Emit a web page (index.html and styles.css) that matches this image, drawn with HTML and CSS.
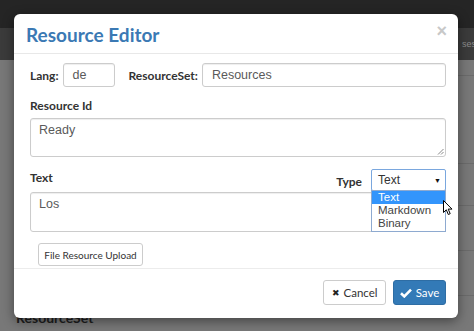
FILE: index.html
```html
<!DOCTYPE html>
<html>
<head>
<meta charset="utf-8">
<link rel="stylesheet" href="styles.css">
</head>
<body>
<div class="page">
  <div class="navbar"></div>
  <div class="subbar"><span class="subtext">ses</span></div>
  <div class="content">
    <div class="side">
      <div class="side-label">ResourceSet</div>
    </div>
    <div class="main">
      <div class="trow r1"></div>
      <div class="trow r2"></div>
      <div class="trow r3"></div>
      <div class="trow r4"></div>
      <div class="trow r5"></div>
    </div>
  </div>
</div>

<div class="modal">
  <div class="modal-header">
    <h1 class="title">Resource Editor</h1>
    <span class="close">&times;</span>
  </div>
  <div class="modal-body">
    <div class="row-top">
      <label class="lbl">Lang:</label>
      <div class="field lang">de</div>
      <label class="lbl set-lbl">ResourceSet:</label>
      <div class="field set">Resources</div>
    </div>
    <div class="group">
      <label class="lbl">Resource Id</label>
      <div class="area id-area">Ready
        <svg class="grip" width="7" height="7" viewBox="0 0 7 7"><path d="M6.5 1 L1 6.5 M6.5 4 L4 6.5" stroke="#888" stroke-width="1"/></svg>
      </div>
    </div>
    <div class="text-head">
      <label class="lbl">Text</label>
      <div class="type-wrap">
        <label class="lbl type-lbl">Type</label>
        <div class="select">
          <span>Text</span>
          <span class="caret">&#9660;</span>
          <div class="dropdown">
            <div class="opt sel">Text</div>
            <div class="opt">Markdown</div>
            <div class="opt">Binary</div>
          </div>
          <svg class="cursor" width="10" height="16" viewBox="0 0 10 16"><path d="M0.5 0.5 L0.5 12.5 L3.3 9.8 L5.3 14.5 L7.2 13.7 L5.2 9.1 L9 9.1 Z" fill="#fff" stroke="#000" stroke-width="1" stroke-linejoin="round"/></svg>
        </div>
      </div>
    </div>
    <div class="area text-area">Los</div>
    <div class="upload-row">
      <div class="btn btn-upload">File Resource Upload</div>
    </div>
  </div>
  <div class="modal-footer">
    <div class="btn btn-cancel"><span class="x-icon">&#10006;</span>Cancel</div>
    <div class="btn btn-save">
      <svg class="check" width="12" height="10" viewBox="0 0 12 10"><path d="M1 5.2 L4.3 8.4 L11 1.6" fill="none" stroke="#fff" stroke-width="2.6"/></svg>Save</div>
  </div>
</div>
</body>
</html>
```

FILE: styles.css
```css
html, body {
  margin: 0;
  padding: 0;
}
body {
  width: 474px;
  height: 331px;
  overflow: hidden;
  position: relative;
  font-family: "Lato", "Liberation Sans", sans-serif;
  color: #333;
}
.page {
  display: flex;
  flex-direction: column;
  height: 331px;
  background: #777;
}
.navbar {
  height: 28px;
  background: #252525;
}
.subbar {
  height: 32px;
  background: #3b3b3b;
  display: flex;
  justify-content: flex-end;
  align-items: center;
}
.subtext {
  font-family: "Liberation Sans", sans-serif;
  font-size: 9px;
  color: #8a8a8a;
  margin-right: -2px;
}
.content {
  flex: 1;
  display: flex;
  background: #787878;
}
.side {
  width: 160px;
  display: flex;
  flex-direction: column;
  justify-content: flex-end;
  padding-left: 16px;
}
.side-label {
  font-weight: bold;
  font-size: 14px;
  line-height: 17px;
  color: #1e1e1e;
  margin-bottom: 5px;
}
.main {
  flex: 1;
  display: flex;
  flex-direction: column;
}
.trow {
  border-bottom: 1px solid #6b6b6b;
}
.r1 { height: 15px; }
.r2 { height: 87px; }
.r3 { height: 41px; }
.r4 { height: 44px; }
.r5 { height: 44px; }

.modal {
  position: absolute;
  left: 14px;
  top: 14px;
  width: 444px;
  height: 304px;
  background: #fff;
  border-radius: 6px;
  box-shadow: 0 3px 12px rgba(0, 0, 0, 0.45);
  display: flex;
  flex-direction: column;
}
.modal-header {
  height: 40px;
  border-bottom: 1px solid #e8e8e8;
  display: flex;
  align-items: center;
  justify-content: space-between;
  padding: 0 12px;
  box-sizing: border-box;
}
.title {
  margin: 0;
  font-size: 19px;
  font-weight: bold;
  color: #3b79b4;
  padding-top: 1px;
}
.close {
  font-family: "Liberation Sans", sans-serif;
  font-size: 18px;
  font-weight: bold;
  color: #c8c8c8;
  margin-right: -1px;
  margin-top: -4px;
}
.modal-body {
  padding: 9px 12px 0 16px;
  display: flex;
  flex-direction: column;
  height: 215px;
  box-sizing: border-box;
  border-bottom: 1px solid #ececec;
}
.lbl {
  font-size: 12px;
  font-weight: bold;
  color: #333;
  white-space: nowrap;
}
.row-top {
  display: flex;
  align-items: center;
  height: 24px;
}
.field, .area {
  font-family: "Liberation Sans", sans-serif;
  font-size: 12.5px;
  color: #5a5a5a;
  border: 1px solid #ccc;
  border-radius: 3px;
  box-shadow: inset 0 1px 1px rgba(0, 0, 0, 0.07);
  box-sizing: border-box;
}
.field {
  height: 24px;
  display: flex;
  align-items: center;
  padding: 0 9px;
}
.lang {
  width: 52px;
  margin-left: 4px;
}
.set-lbl {
  margin-left: 14px;
}
.set {
  flex: 1;
  margin-left: 4px;
}
.group {
  display: flex;
  flex-direction: column;
  margin-top: 12px;
}
.group .lbl {
  line-height: 14px;
}
.area {
  position: relative;
  padding: 4px 8px;
}
.id-area {
  margin-top: 5px;
  height: 39px;
}
.grip {
  position: absolute;
  right: 1px;
  bottom: 1px;
}
.text-head {
  display: flex;
  justify-content: space-between;
  align-items: flex-start;
  margin-top: 12px;
  height: 22px;
}
.text-head > .lbl {
  margin-top: 1px;
}
.type-wrap {
  display: flex;
  align-items: center;
}
.type-lbl {
  margin-right: 9px;
  margin-top: 2px;
}
.select {
  position: relative;
  width: 75px;
  height: 22px;
  box-sizing: border-box;
  border: 1px solid #7aa7de;
  border-radius: 2px;
  display: flex;
  align-items: center;
  justify-content: space-between;
  padding: 0 4px 0 6px;
  font-family: "Liberation Sans", sans-serif;
  font-size: 12px;
  color: #333;
  background: #fff;
  z-index: 2;
}
.caret {
  font-size: 7px;
  color: #111;
}
.dropdown {
  position: absolute;
  left: -1px;
  top: 20px;
  width: 75px;
  box-sizing: border-box;
  border: 1px solid #8eaad0;
  background: #fff;
  display: flex;
  flex-direction: column;
  padding-bottom: 1px;
}
.opt {
  height: 13px;
  line-height: 13px;
  font-size: 11.5px;
  color: #444;
  padding-left: 6px;
}
.opt.sel {
  background: #3395fc;
  color: #fff;
}
.cursor {
  position: absolute;
  left: 71px;
  top: 30px;
}
.text-area {
  margin-top: 1px;
  height: 40px;
}
.upload-row {
  display: flex;
  margin-top: 11px;
  padding-left: 8px;
}
.btn {
  box-sizing: border-box;
  border-radius: 3px;
  display: flex;
  align-items: center;
  justify-content: center;
}
.btn-upload {
  width: 105px;
  height: 23px;
  border: 1px solid #ccc;
  font-size: 10px;
  color: #333;
}
.modal-footer {
  flex: 1;
  display: flex;
  justify-content: flex-end;
  align-items: flex-start;
  padding: 11px 12px 0 0;
  gap: 7px;
}
.btn-cancel {
  width: 63px;
  height: 25px;
  border: 1px solid #ccc;
  font-size: 11.5px;
  color: #333;
}
.x-icon {
  font-size: 9px;
  margin-right: 4px;
  color: #222;
}
.btn-save {
  width: 53px;
  height: 25px;
  background: #337ab7;
  border: 1px solid #2e6da4;
  color: #fff;
  font-size: 11.5px;
}
.check {
  margin-right: 4px;
}
```
